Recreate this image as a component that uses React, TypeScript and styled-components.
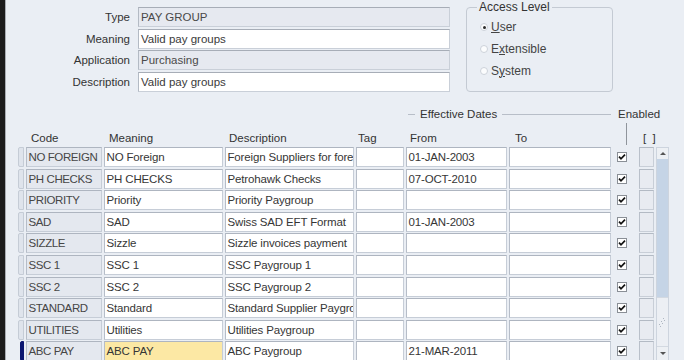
import React from 'react';
import styled, { createGlobalStyle } from 'styled-components';

const GlobalStyle = createGlobalStyle`
  html, body { margin: 0; padding: 0; background: #eaeef4; }
  body { font-family: "Liberation Sans", Arial, sans-serif; width: 684px; height: 360px; overflow: hidden; }
  #root { height: 360px; }
`;

const Window = styled.div`
  display: flex;
  width: 684px;
  height: 360px;
  overflow: hidden;
  background: #eaeef4;
`;

const Edge = styled.div`
  flex: none;
  width: 5px;
  background: #1c1c1c;
  border-right: 1px solid #a9adb3;
`;

const Main = styled.div`
  flex: 1;
  min-width: 0;
  display: flex;
  flex-direction: column;
  padding-top: 1px;
`;

const TopSection = styled.div`
  display: flex;
  align-items: flex-start;
  gap: 16px;
`;

const Form = styled.div`
  display: grid;
  grid-template-columns: 124px 312px;
  grid-auto-rows: 20px;
  column-gap: 8px;
  row-gap: 1.5px;
  margin-top: 6px;
`;

const Label = styled.span`
  justify-self: end;
  align-self: center;
  font-size: 11.5px;
  color: #333;
`;

const HeaderField = styled.div<{ $readonly?: boolean }>`
  box-sizing: border-box;
  height: 20px;
  border: 1px solid;
  border-color: #a7adb7 #c9cfd8 #c9cfd8 #b3bac4;
  background: ${(p) => (p.$readonly ? '#e6e9f0' : '#ffffff')};
  color: ${(p) => (p.$readonly ? '#4a4a4a' : '#3a3a3a')};
  font-size: 11.5px;
  padding: 0 2px;
  display: flex;
  align-items: center;
  white-space: nowrap;
  overflow: hidden;
`;

const Group = styled.fieldset`
  margin: 0;
  width: 147px;
  height: 91px;
  box-sizing: border-box;
  border: 1px solid #c4cad3;
  border-radius: 4px;
  padding: 3px 0 0 12px;
  display: flex;
  flex-direction: column;
`;

const Legend = styled.legend`
  padding: 0 2px;
  margin-left: -2px;
  font-size: 12px;
  line-height: 12px;
  color: #333;
`;

const RadioRow = styled.div`
  height: 22px;
  display: flex;
  align-items: center;
  gap: 3px;
  font-size: 12px;
  color: #444;
  u { text-decoration-thickness: 1px; text-underline-offset: 1px; }
`;

const RadioDot = styled.span<{ $checked?: boolean }>`
  box-sizing: border-box;
  width: 8px;
  height: 8px;
  margin-left: 1px;
  border-radius: 50%;
  border: 1px solid #cdd2da;
  background: #fbfcfd;
  display: flex;
  align-items: center;
  justify-content: center;
  &::after {
    content: '';
    width: 3px;
    height: 3px;
    border-radius: 50%;
    background: ${(p) => (p.$checked ? '#2a2a2a' : 'transparent')};
  }
`;

const Table = styled.div`
  margin-top: 15px;
  margin-left: 12px;
  display: flex;
  flex-direction: column;
  gap: 2px;
`;

const COLS = '6px 76px 119px 129px 48px 101px 102px 24px 15px';

const HeadGrid = styled.div<{ $h: number }>`
  display: grid;
  grid-template-columns: ${COLS} 13px;
  column-gap: 2px;
  height: ${(p) => p.$h}px;
  align-items: end;
`;

const DateGroup = styled.div`
  grid-column: 6 / 8;
  align-self: center;
  display: flex;
  align-items: center;
  gap: 5px;
  font-size: 11.5px;
  color: #333;
  white-space: nowrap;
`;

const Rule = styled.span<{ $w?: number }>`
  height: 1px;
  background: #b8bec8;
  ${(p) => (p.$w ? `width: ${p.$w}px; margin-left: 2px;` : 'flex: 1;')}
`;

const EnabledTitle = styled.div`
  grid-column: 8 / 11;
  align-self: center;
  padding-left: 5px;
  font-size: 11.5px;
  color: #333;
  white-space: nowrap;
`;

const ColHead = styled.div<{ $indent: number }>`
  padding-left: ${(p) => p.$indent}px;
  padding-bottom: 1px;
  font-size: 11.5px;
  line-height: 12px;
  color: #333;
  white-space: pre;
`;

const TickLine = styled.div`
  align-self: stretch;
  margin-left: 13px;
  width: 1px;
  background: #8f949b;
`;

const Body = styled.div`
  display: flex;
  gap: 2px;
`;

const RowList = styled.div`
  display: flex;
  flex-direction: column;
  gap: 1.6px;
`;

const Row = styled.div`
  display: grid;
  grid-template-columns: ${COLS};
  column-gap: 2px;
  height: 20px;
`;

const Indicator = styled.div<{ $current?: boolean }>`
  box-sizing: border-box;
  border: 1px solid ${(p) => (p.$current ? '#0b1670' : '#c5ccd6')};
  background: ${(p) => (p.$current ? '#0b1670' : '#dfe4ec')};
  border-radius: 2px 0 0 2px;
  ${(p) => (p.$current ? 'margin-left: 2px;' : '')}
`;

const Cell = styled.div<{ $tone: 'gray' | 'white' | 'yellow' }>`
  box-sizing: border-box;
  border: 1px solid;
  border-color: #aeb5c0 #c6cdd7 #c6cdd7 #b6bdc8;
  background: ${(p) => (p.$tone === 'gray' ? '#e4e8ef' : p.$tone === 'yellow' ? '#fce8a4' : '#ffffff')};
  color: ${(p) => (p.$tone === 'gray' ? '#464646' : '#363636')};
  font-size: 11.5px;
  letter-spacing: ${(p) => (p.$tone === 'gray' ? '-0.4px' : '-0.15px')};
  padding: 0 0 0 1.5px;
  display: flex;
  align-items: center;
  white-space: nowrap;
  overflow: hidden;
`;

const CheckCell = styled.div`
  display: flex;
  align-items: center;
  padding-left: 4px;
`;

const CheckBox = styled.span`
  box-sizing: border-box;
  width: 10px;
  height: 10px;
  border: 1px solid #8a8f96;
  background: #fff;
  display: flex;
  align-items: center;
  justify-content: center;
`;

const SmallField = styled.div`
  box-sizing: border-box;
  border: 1px solid;
  border-color: #b3bac4 #c8ced7 #c8ced7 #b9c0ca;
  background: #e8ebf1;
`;

const Scrollbar = styled.div`
  box-sizing: border-box;
  width: 13px;
  border: 1px solid #cdd4de;
  background: #edf0f4;
  display: flex;
  flex-direction: column;
`;

const ArrowBtn = styled.div<{ $h: number }>`
  height: ${(p) => p.$h}px;
  flex: none;
  display: flex;
  align-items: center;
  justify-content: center;
`;

const Arrow = styled.span<{ $down?: boolean }>`
  width: 0;
  height: 0;
  border-left: 3px solid transparent;
  border-right: 3px solid transparent;
  ${(p) => (p.$down ? 'border-top: 3px solid #555;' : 'border-bottom: 3px solid #555;')}
`;

const TrackFill = styled.div`
  flex: 1;
  background: #c5d4e6;
`;

const Thumb = styled.div`
  flex: none;
  height: 48px;
  background: #eceff4;
  border-top: 1px solid #d3d9e1;
  border-bottom: 1px solid #d3d9e1;
  display: flex;
  align-items: center;
  justify-content: center;
`;

type RowData = { code: string; meaning: string; desc: string; tag: string; from: string; to: string };

const rows: RowData[] = [
  { code: 'NO FOREIGN', meaning: 'NO Foreign', desc: 'Foreign Suppliers for foreign', tag: '', from: '01-JAN-2003', to: '' },
  { code: 'PH CHECKS', meaning: 'PH CHECKS', desc: 'Petrohawk Checks', tag: '', from: '07-OCT-2010', to: '' },
  { code: 'PRIORITY', meaning: 'Priority', desc: 'Priority Paygroup', tag: '', from: '', to: '' },
  { code: 'SAD', meaning: 'SAD', desc: 'Swiss SAD EFT Format', tag: '', from: '01-JAN-2003', to: '' },
  { code: 'SIZZLE', meaning: 'Sizzle', desc: 'Sizzle invoices payment', tag: '', from: '', to: '' },
  { code: 'SSC 1', meaning: 'SSC 1', desc: 'SSC Paygroup 1', tag: '', from: '', to: '' },
  { code: 'SSC 2', meaning: 'SSC 2', desc: 'SSC Paygroup 2', tag: '', from: '', to: '' },
  { code: 'STANDARD', meaning: 'Standard', desc: 'Standard Supplier Paygroup', tag: '', from: '', to: '' },
  { code: 'UTILITIES', meaning: 'Utilities', desc: 'Utilities Paygroup', tag: '', from: '', to: '' },
  { code: 'ABC PAY', meaning: 'ABC PAY', desc: 'ABC Paygroup', tag: '', from: '21-MAR-2011', to: '' },
];

const CURRENT = 9;

const Check = () => (
  <svg width="8" height="8" viewBox="0 0 8 8">
    <path d="M1 3.6 L3 5.8 L7 1.6" fill="none" stroke="#111" strokeWidth="1.7" />
  </svg>
);

const Grip = () => (
  <svg width="7" height="9" viewBox="0 0 7 9">
    <g fill="#aeb6c1">
      <rect x="4" y="0" width="1" height="1" />
      <rect x="5" y="2" width="1" height="1" />
      <rect x="2" y="3" width="1" height="1" />
      <rect x="3" y="5" width="1" height="1" />
      <rect x="0" y="6" width="1" height="1" />
      <rect x="1" y="8" width="1" height="1" />
    </g>
  </svg>
);

export default function App() {
  return (
    <>
      <GlobalStyle />
      <Window>
        <Edge />
        <Main>
          <TopSection>
            <Form>
              <Label>Type</Label>
              <HeaderField $readonly>PAY GROUP</HeaderField>
              <Label>Meaning</Label>
              <HeaderField>Valid pay groups</HeaderField>
              <Label>Application</Label>
              <HeaderField $readonly>Purchasing</HeaderField>
              <Label>Description</Label>
              <HeaderField>Valid pay groups</HeaderField>
            </Form>
            <Group>
              <Legend>Access Level</Legend>
              <RadioRow>
                <RadioDot $checked />
                <span><u>U</u>ser</span>
              </RadioRow>
              <RadioRow>
                <RadioDot />
                <span>E<u>x</u>tensible</span>
              </RadioRow>
              <RadioRow>
                <RadioDot />
                <span>S<u>y</u>stem</span>
              </RadioRow>
            </Group>
          </TopSection>

          <Table>
            <HeadGrid $h={14}>
              <DateGroup>
                <Rule $w={7} />
                <span>Effective Dates</span>
                <Rule />
              </DateGroup>
              <EnabledTitle>Enabled</EnabledTitle>
            </HeadGrid>
            <HeadGrid $h={22}>
              <span />
              <ColHead $indent={5}>Code</ColHead>
              <ColHead $indent={5}>Meaning</ColHead>
              <ColHead $indent={4}>Description</ColHead>
              <ColHead $indent={2}>Tag</ColHead>
              <ColHead $indent={4}>From</ColHead>
              <ColHead $indent={6}>To</ColHead>
              <TickLine />
              <ColHead $indent={4}>{'[  ]'}</ColHead>
            </HeadGrid>
            <Body>
              <RowList>
                {rows.map((r, i) => {
                  const cur = i === CURRENT;
                  return (
                    <Row key={r.code}>
                      <Indicator $current={cur} />
                      <Cell $tone="gray">{r.code}</Cell>
                      <Cell $tone={cur ? 'yellow' : 'white'}>{r.meaning}</Cell>
                      <Cell $tone="white">{r.desc}</Cell>
                      <Cell $tone="white">{r.tag}</Cell>
                      <Cell $tone="white">{r.from}</Cell>
                      <Cell $tone="white">{r.to}</Cell>
                      <CheckCell>
                        <CheckBox>
                          <Check />
                        </CheckBox>
                      </CheckCell>
                      <SmallField />
                    </Row>
                  );
                })}
              </RowList>
              <Scrollbar>
                <ArrowBtn $h={11}>
                  <Arrow />
                </ArrowBtn>
                <TrackFill />
                <Thumb>
                  <Grip />
                </Thumb>
                <ArrowBtn $h={13}>
                  <Arrow $down />
                </ArrowBtn>
              </Scrollbar>
            </Body>
          </Table>
        </Main>
      </Window>
    </>
  );
}
